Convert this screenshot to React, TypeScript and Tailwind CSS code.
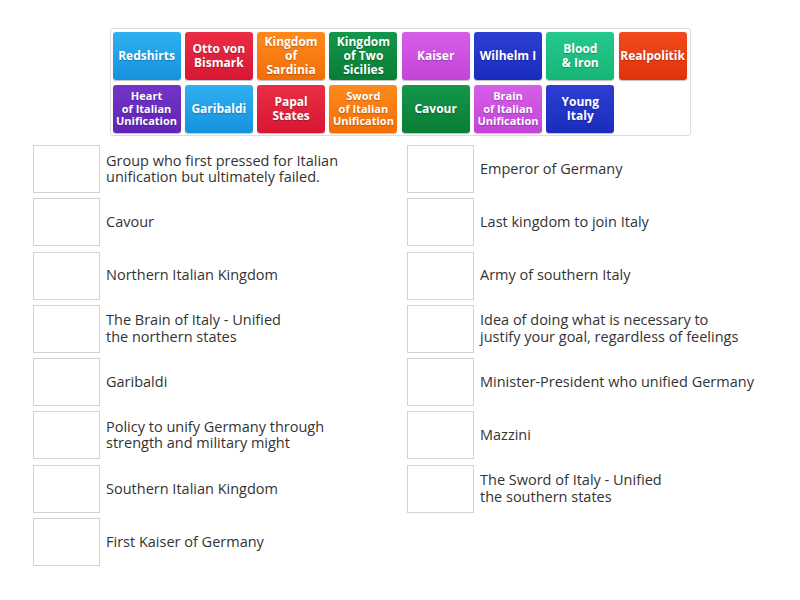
import React from 'react';

interface Tile {
  lines: string[];
  from: string;
  to: string;
  small?: boolean;
}

const tiles: Tile[] = [
  { lines: ['Redshirts'], from: 'from-[#2fb0f0]', to: 'to-[#1592de]' },
  { lines: ['Otto von', 'Bismark'], from: 'from-[#ea2c45]', to: 'to-[#d81632]' },
  { lines: ['Kingdom', 'of', 'Sardinia'], from: 'from-[#fd8a1c]', to: 'to-[#f36e06]' },
  { lines: ['Kingdom', 'of Two', 'Sicilies'], from: 'from-[#13974a]', to: 'to-[#0a7d36]' },
  { lines: ['Kaiser'], from: 'from-[#d75ee8]', to: 'to-[#c244d8]' },
  { lines: ['Wilhelm I'], from: 'from-[#2c3fd2]', to: 'to-[#1a2cbe]' },
  { lines: ['Blood', '& Iron'], from: 'from-[#26c88d]', to: 'to-[#15b676]' },
  { lines: ['Realpolitik'], from: 'from-[#f24a1c]', to: 'to-[#e0320a]' },
  { lines: ['Heart', 'of Italian', 'Unification'], from: 'from-[#7434c8]', to: 'to-[#6024b6]', small: true },
  { lines: ['Garibaldi'], from: 'from-[#2fb0f0]', to: 'to-[#1592de]' },
  { lines: ['Papal', 'States'], from: 'from-[#ea2c45]', to: 'to-[#d81632]' },
  { lines: ['Sword', 'of Italian', 'Unification'], from: 'from-[#fd8a1c]', to: 'to-[#f36e06]', small: true },
  { lines: ['Cavour'], from: 'from-[#13974a]', to: 'to-[#0a7d36]' },
  { lines: ['Brain', 'of Italian', 'Unification'], from: 'from-[#d75ee8]', to: 'to-[#c244d8]', small: true },
  { lines: ['Young', 'Italy'], from: 'from-[#2c3fd2]', to: 'to-[#1a2cbe]' },
];

const leftRows: string[][] = [
  ['Group who first pressed for Italian', 'unification but ultimately failed.'],
  ['Cavour'],
  ['Northern Italian Kingdom'],
  ['The Brain of Italy - Unified', 'the northern states'],
  ['Garibaldi'],
  ['Policy to unify Germany through', 'strength and military might'],
  ['Southern Italian Kingdom'],
  ['First Kaiser of Germany'],
];

const rightRows: string[][] = [
  ['Emperor of Germany'],
  ['Last kingdom to join Italy'],
  ['Army of southern Italy'],
  ['Idea of doing what is necessary to', 'justify your goal, regardless of feelings'],
  ['Minister-President who unified Germany'],
  ['Mazzini'],
  ['The Sword of Italy - Unified', 'the southern states'],
];

const Row: React.FC<{ lines: string[] }> = ({ lines }) => (
  <div className="flex items-center h-[48px]">
    <div className="w-[67px] h-[48px] shrink-0 border border-[#d3d3d3] bg-white" />
    <div className="pl-[6px] text-[14.5px] leading-[16.5px] text-[#333333]">
      {lines.map((l, i) => (
        <div key={i}>{l}</div>
      ))}
    </div>
  </div>
);

export default function App() {
  return (
    <div
      className="w-[800px] h-[600px] bg-white pt-[28px] overflow-hidden"
      style={{ fontFamily: '"Open Sans", "Liberation Sans", sans-serif' }}
    >
      <div className="mx-auto w-[581px] border border-[#dcdcdc] rounded-[3px] pl-[2px] pr-[3px] pt-[3px] pb-[2px]">
        <div className="grid grid-cols-[repeat(8,68px)] gap-x-[4.3px] gap-y-[5px]">
          {tiles.map(t => (
            <div
              key={t.lines.join(' ')}
              className={`h-[48px] rounded-[3px] bg-linear-to-b ${t.from} ${t.to} shadow-[0_1px_1px_rgba(0,0,0,0.25)] flex flex-col items-center justify-center text-center text-white font-bold whitespace-nowrap [text-shadow:0_1px_1px_rgba(0,0,0,0.25)] ${
                t.small ? 'text-[11px] leading-[12.5px]' : 'text-[12px] leading-[14px]'
              }`}
            >
              {t.lines.map((l, i) => (
                <span key={i}>{l}</span>
              ))}
            </div>
          ))}
        </div>
      </div>

      <div className="flex pl-[33px] pt-[9px]">
        <div className="w-[374px] flex flex-col gap-[5.3px]">
          {leftRows.map((r, i) => (
            <Row key={i} lines={r} />
          ))}
        </div>
        <div className="flex-1 flex flex-col gap-[5.3px]">
          {rightRows.map((r, i) => (
            <Row key={i} lines={r} />
          ))}
        </div>
      </div>
    </div>
  );
}
